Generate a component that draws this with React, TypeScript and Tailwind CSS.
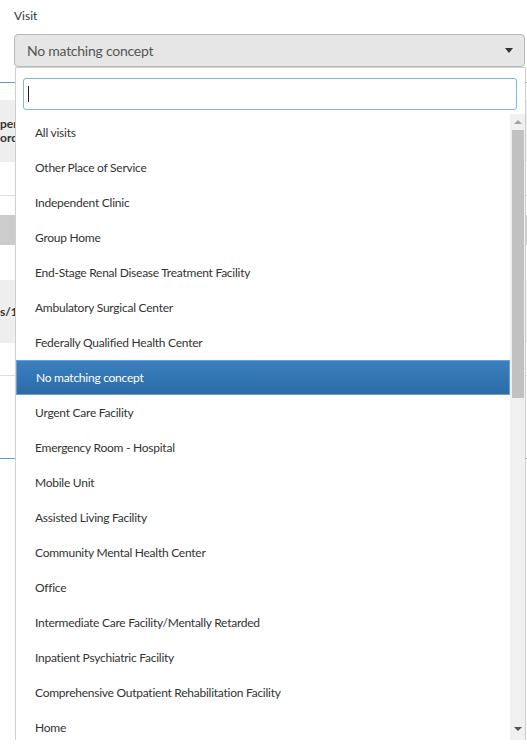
import React from 'react';

const visits = [
  'All visits',
  'Other Place of Service',
  'Independent Clinic',
  'Group Home',
  'End-Stage Renal Disease Treatment Facility',
  'Ambulatory Surgical Center',
  'Federally Qualified Health Center',
  'No matching concept',
  'Urgent Care Facility',
  'Emergency Room - Hospital',
  'Mobile Unit',
  'Assisted Living Facility',
  'Community Mental Health Center',
  'Office',
  'Intermediate Care Facility/Mentally Retarded',
  'Inpatient Psychiatric Facility',
  'Comprehensive Outpatient Rehabilitation Facility',
  'Home',
];

const selected = 'No matching concept';

export default function App() {
  return (
    <div
      className="relative w-[527px] h-[750px] overflow-hidden bg-white text-[#333]"
      style={{ fontFamily: 'Lato, "Open Sans", sans-serif' }}
    >
      <div className="pl-[14px] pr-[2px] pt-[7px]">
        <label className="block text-[12px] leading-[17px]">Visit</label>
        <div className="mt-[10px] h-[33px] rounded-[4px] border border-[#b8b8b8] bg-[#e6e6e6] flex items-center justify-between pl-[12px] pr-[11px]">
          <span className="text-[14px] tracking-[-0.25px] text-[#555]">No matching concept</span>
          <span className="w-0 h-0 border-l-[4px] border-r-[4px] border-t-[5px] border-l-transparent border-r-transparent border-t-[#333]" />
        </div>
      </div>

      {/* page content behind the open dropdown */}
      <div className="mt-[15px] h-px bg-[#5b9bd5]" />
      <div className="mt-[17px] h-[62px] bg-[#eeeeee] flex flex-col justify-center text-[12px] font-bold leading-[14px]">
        <span>per</span>
        <span>ord</span>
      </div>
      <div className="mt-[33px] h-px bg-[#dddddd]" />
      <div className="mt-[19px] h-[30px] bg-[#cccccc]" />
      <div className="mt-[35px] h-[63px] bg-[#eeeeee] flex items-center text-[12px] font-bold">
        <span>s/1</span>
      </div>
      <div className="mt-[32px] h-px bg-[#dddddd]" />
      <div className="mt-[82px] h-px bg-[#5b9bd5]" />

      {/* open dropdown */}
      <div className="absolute left-[15px] top-[67px] w-[511px] h-[673px] bg-white border-l border-t border-r border-[#cfcfcf] flex flex-col">
        <div className="pt-[10px] pl-[7px] pr-[8px] pb-[4px]">
          <div className="h-[32px] rounded-[3px] border border-[#7db7e8] flex items-center pl-[4px]">
            <span className="w-px h-[16px] bg-[#222]" />
          </div>
        </div>
        <div className="flex flex-1 min-h-0">
          <ul className="flex-1 overflow-hidden pt-[1px]">
            {visits.map((v) => (
              <li
                key={v}
                className={
                  v === selected
                    ? 'h-[35px] flex items-center pl-[19px] text-[12px] tracking-[-0.25px] text-white bg-gradient-to-b from-[#3a7fbf] to-[#2c6ca8] border border-[#6d9fd0]'
                    : 'h-[35px] flex items-center pl-[19px] text-[12px] tracking-[-0.25px] text-[#333]'
                }
              >
                {v}
              </li>
            ))}
          </ul>
          <div className="w-[15px] bg-[#f0f0f0] flex flex-col items-center">
            <div className="h-[16px] flex items-center justify-center">
              <span className="w-0 h-0 border-l-[4px] border-r-[4px] border-b-[4px] border-l-transparent border-r-transparent border-b-[#a3a3a3]" />
            </div>
            <div className="w-[12px] h-[268px] bg-[#c1c1c1]" />
            <div className="flex-1" />
            <div className="h-[17px] flex items-start justify-center pt-[4px]">
              <span className="w-0 h-0 border-l-[4px] border-r-[4px] border-t-[4px] border-l-transparent border-r-transparent border-t-[#505050]" />
            </div>
          </div>
        </div>
      </div>
    </div>
  );
}
